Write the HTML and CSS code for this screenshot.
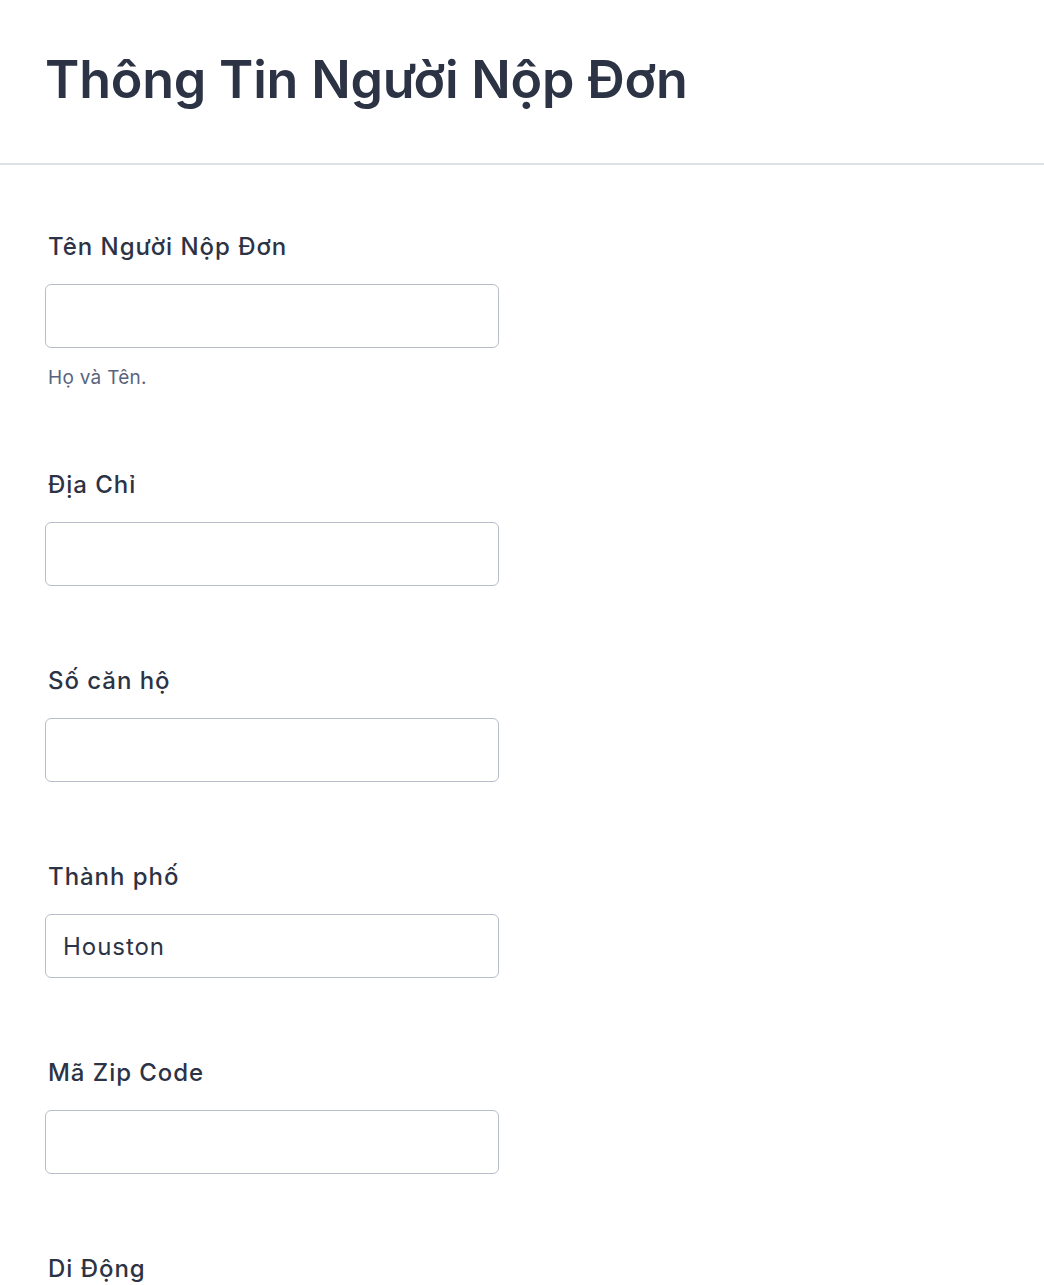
FILE: index.html
```html
<!DOCTYPE html>
<html lang="vi">
<head>
<meta charset="utf-8">
<title>Thông Tin Người Nộp Đơn</title>
<link rel="stylesheet" href="styles.css">
</head>
<body>
<div class="form">
  <header class="form-header">
    <h1 class="form-title">Thông Tin Người Nộp Đơn</h1>
  </header>
  <ul class="form-fields">
    <li class="field">
      <label class="field-label" for="f1">Tên Người Nộp Đơn</label>
      <input class="field-input" id="f1" type="text">
      <div class="field-sublabel">Họ và Tên.</div>
    </li>
    <li class="field">
      <label class="field-label" for="f2">Địa Chỉ</label>
      <input class="field-input" id="f2" type="text">
    </li>
    <li class="field">
      <label class="field-label" for="f3">Số căn hộ</label>
      <input class="field-input" id="f3" type="text">
    </li>
    <li class="field">
      <label class="field-label" for="f4">Thành phố</label>
      <input class="field-input" id="f4" type="text" value="Houston">
    </li>
    <li class="field">
      <label class="field-label" for="f5">Mã Zip Code</label>
      <input class="field-input" id="f5" type="text">
    </li>
    <li class="field">
      <label class="field-label" for="f6">Di Động</label>
      <input class="field-input" id="f6" type="text">
    </li>
  </ul>
</div>
</body>
</html>
```

FILE: styles.css
```css
* {
  box-sizing: border-box;
}

html, body {
  margin: 0;
  padding: 0;
  background: #ffffff;
}

body {
  font-family: Inter, "Noto Sans", "Liberation Sans", sans-serif;
  color: #2c3345;
}

.form-header {
  padding: 48px 45px 51px;
  border-bottom: 2px solid #dde1e8;
}

.form-title {
  margin: 0;
  font-size: 52px;
  font-weight: 600;
  line-height: 64px;
  color: #2c3345;
  letter-spacing: -0.2px;
}

.form-fields {
  list-style: none;
  margin: 0;
  padding: 64px 45px 0;
  display: flex;
  flex-direction: column;
  gap: 77px;
}

.field {
  display: flex;
  flex-direction: column;
  align-items: flex-start;
}

.field-label {
  display: block;
  padding-left: 3px;
  font-size: 24px;
  font-weight: 500;
  line-height: 36px;
  letter-spacing: 0.04em;
  color: #2c3345;
  margin-bottom: 19px;
}

.field-input {
  width: 454px;
  height: 64px;
  margin: 0;
  padding: 0 17px;
  border: 1.5px solid #b8bdc9;
  border-radius: 6px;
  background: #ffffff;
  font-family: Inter, "Noto Sans", "Liberation Sans", sans-serif;
  font-size: 24px;
  letter-spacing: 0.04em;
  color: #2c3345;
  outline: none;
}

.field-sublabel {
  margin-top: 18px;
  padding-left: 3px;
  font-size: 19px;
  line-height: 24px;
  letter-spacing: 0.015em;
  color: #57647e;
}
```
